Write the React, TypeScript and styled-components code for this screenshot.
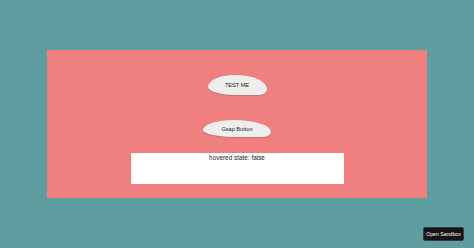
import React, { useState } from "react";
import styled, { createGlobalStyle } from "styled-components";

const GlobalStyle = createGlobalStyle`
  html, body {
    margin: 0;
    padding: 0;
    height: 100%;
  }
  body {
    background: #5f9ea0;
    font-family: "Liberation Sans", Arial, sans-serif;
  }
  #root {
    height: 100%;
  }
`;

const Page = styled.div`
  height: 100vh;
  display: flex;
  align-items: center;
  justify-content: center;
  position: relative;
`;

const Stage = styled.div`
  width: 380px;
  height: 148px;
  box-sizing: border-box;
  background: #f08080;
  display: flex;
  flex-direction: column;
  align-items: center;
  padding-top: 25px;
`;

const BlobButton = styled.button<{ $w: number; $h: number; $gap: number }>`
  width: ${(p) => p.$w}px;
  height: ${(p) => p.$h}px;
  margin-bottom: ${(p) => p.$gap}px;
  border: none;
  padding: 0;
  background: #eeeeee;
  color: #1a1a1a;
  font-family: "Liberation Sans", Arial, sans-serif;
  font-size: 5.6px;
  border-radius: 45% 55% 12% 50% / 60% 70% 30% 40%;
  box-shadow: 0 1px 1px rgba(0, 0, 0, 0.15);
  cursor: pointer;
`;

const StatePanel = styled.div`
  width: 213px;
  height: 31px;
  background: #ffffff;
  color: #222;
  font-size: 6.4px;
  text-align: center;
  line-height: 9px;
`;

const SandboxButton = styled.button`
  position: absolute;
  right: 10px;
  bottom: 7px;
  width: 41px;
  height: 14px;
  padding: 0;
  background: #151515;
  border: 1px solid #3a3a3a;
  border-radius: 2px;
  color: #ffffff;
  font-family: "Liberation Sans", Arial, sans-serif;
  font-size: 5.2px;
`;

export default function App() {
  const [hovered, setHovered] = useState(false);

  return (
    <>
      <GlobalStyle />
      <Page>
        <Stage>
          <BlobButton $w={59} $h={20} $gap={25}>
            TEST ME
          </BlobButton>
          <BlobButton
            $w={68}
            $h={17}
            $gap={16}
            onMouseEnter={() => setHovered(true)}
            onMouseLeave={() => setHovered(false)}
          >
            Gsap Button
          </BlobButton>
          <StatePanel>hovered state: {hovered ? "true" : "false"}</StatePanel>
        </Stage>
        <SandboxButton>Open Sandbox</SandboxButton>
      </Page>
    </>
  );
}
